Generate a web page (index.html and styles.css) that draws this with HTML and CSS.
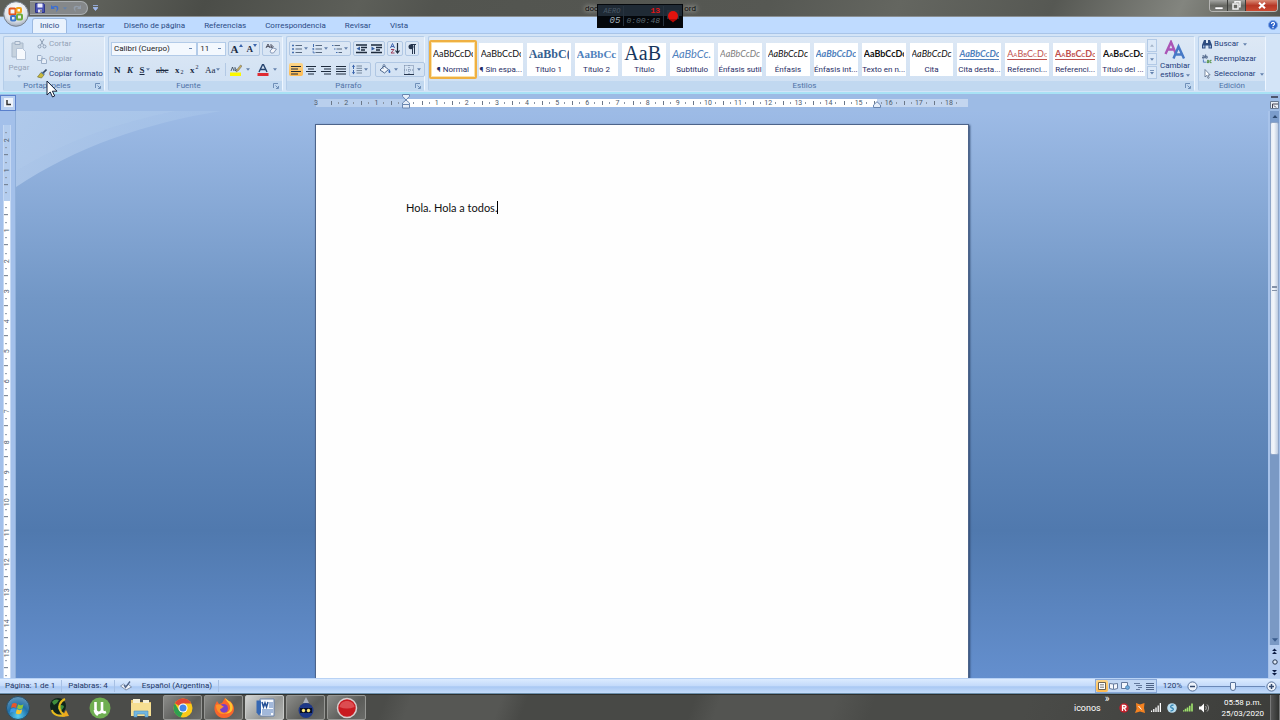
FILE: index.html
```html
<!DOCTYPE html>
<html lang="es">
<head>
<meta charset="utf-8">
<title>Documento - Word</title>
<link rel="stylesheet" href="styles.css">
</head>
<body>
<svg class="defs" aria-hidden="true">
  <symbol id="caret" viewBox="0 0 5 3"><path d="M0 0h5L2.500 3z" fill="#6482ad"/></symbol>
  <symbol id="launch" viewBox="0 0 6 6"><path d="M.5 5V.5H5M2.500 2.500 5 5M5.500 3v2.500H3" fill="none" stroke="#6f8fb8"/></symbol>
  <symbol id="lines" viewBox="0 0 10 10"><path d="M0 1.500h10M0 6.500h10" stroke="#1d2b3d" stroke-width="1.200"/><path d="M0 4h7M0 9h7" stroke="#1d2b3d" stroke-width="1.200"/></symbol>
</svg>

<header class="titlebar">
  <div class="quick">
    <button class="ic" aria-label="Guardar"><svg width="10" height="10" viewBox="0 0 10 10"><path d="M.5.5h8l1 1v8h-9z" fill="#4a53b4" stroke="#2e3585"/><path d="M2.500.5h5v4h-5z" fill="#eef"/><path d="M3 6.500h4v3H3z" fill="#dde"/><path d="M5.500 7h1v2h-1z" fill="#333"/></svg></button>
    <button class="ic undo" aria-label="Deshacer"><svg width="10" height="9" viewBox="0 0 10 9"><path d="M1 1v4h4L3.700 3.700C6 2 8 4 6 8 10 5 9 0 2.600 2.500z" fill="#3d6fd0"/></svg><svg width="4" height="3"><use href="#caret"/></svg></button>
    <button class="ic faded" aria-label="Rehacer"><svg width="10" height="9" viewBox="0 0 10 9"><path d="M9 1v4H5l1.300-1.300C4 2 2 4 4 8 0 5 1 0 7.400 2.500z" fill="#9fb0c8"/></svg></button>
  </div>
  <button class="ic more" aria-label="Personalizar"><svg width="5" height="6" viewBox="0 0 5 6"><path d="M0 .5h5M0 2.500h5L2.500 5.500z" stroke="#9fbaf0" fill="#9fbaf0" stroke-width=".8"/></svg></button>
  <h1 class="title"><span>doc</span><span>ord</span></h1>
  <div class="winbtns">
    <button aria-label="Minimizar"><svg width="8" height="8"><path d="M0 5h8v2.500H0z" fill="#fff" stroke="#444" stroke-width=".5"/></svg></button>
    <button aria-label="Restaurar"><svg width="9" height="9" viewBox="0 0 9 9"><path d="M3 2V.8h5v5H7M1 3h5v5H1z" fill="none" stroke="#f4f4f4" stroke-width="1.500"/></svg></button>
    <button class="close" aria-label="Cerrar"><svg width="8" height="7" viewBox="0 0 8 7"><path d="m1 .7 6 5.600M7 .7 1 6.300" stroke="#fff" stroke-width="2"/></svg></button>
  </div>
  <button class="orb" aria-label="Botón de Office"><svg width="26" height="26" viewBox="0 0 26 26"><defs><radialGradient id="og" cx=".5" cy=".3" r=".75"><stop offset="0" stop-color="#fff"/><stop offset=".65" stop-color="#dfe3ea"/><stop offset="1" stop-color="#8d9bb0"/></radialGradient></defs><circle cx="13" cy="13" r="12.300" fill="url(#og)" stroke="#78828f"/><g fill="none" stroke-width="2"><rect x="6.500" y="7.500" width="6" height="6" rx="1" stroke="#e3561d"/><rect x="13.500" y="7" width="4.500" height="4.500" rx="1" stroke="#f0a21d"/><rect x="8" y="15" width="4.500" height="4.500" rx="1" stroke="#3f78c9"/><rect x="14" y="13.500" width="5" height="5" rx="1" stroke="#6aab3c"/></g></svg></button>
  <div class="recorder">
    <div class="rec-cell"><span class="dim">AERO</span><span class="big">05</span></div>
    <div class="rec-cell wide"><span class="red">13</span><span class="time">0:00:48</span></div>
    <svg width="14" height="16" viewBox="0 0 14 16"><path d="M1 2h12v9H1z" fill="#26313c"/><circle cx="7" cy="8" r="5" fill="#e3130e"/><path d="m3 11 4 3.500L11 11z" fill="#b10a08"/></svg>
  </div>
</header>

<nav class="tabs">
  <a class="on" href="#">Inicio</a><a href="#">Insertar</a><a href="#">Diseño de página</a><a href="#">Referencias</a><a href="#">Correspondencia</a><a href="#">Revisar</a><a href="#">Vista</a>
  <button class="ic help" aria-label="Ayuda"><svg width="10" height="10" viewBox="0 0 10 10"><circle cx="5" cy="5" r="4.500" fill="#2c62c9" stroke="#7fa6e4"/><path d="M3.500 4c0-2.200 3.200-2 3 0C6.400 5 5 5 5 6.200M5 7v1.200" stroke="#fff" fill="none" stroke-width="1.200"/></svg></button>
</nav>

<section class="ribbon">
  <div class="group clip">
    <div class="body">
      <button class="paste"><svg width="16" height="20" viewBox="0 0 16 20"><path d="M1 2h11v14H1z" fill="#c6d2de" stroke="#a9b9cb"/><path d="M4 .5h5v3H4z" fill="#dbe3ec" stroke="#a0b0c4"/><path d="M5.500 7.500h6l3 3v8h-9z" fill="#f6f9fd" stroke="#b4c3d6"/></svg><span>Pegar</span><svg width="4" height="3" opacity=".5"><use href="#caret"/></svg></button>
      <div class="cliplist">
        <button class="off"><svg width="10" height="10" viewBox="0 0 10 10"><path d="m3 0 3.500 6M7 0 3.500 6" stroke="#8fa0b5"/><circle cx="2.500" cy="7.500" r="1.500" fill="none" stroke="#8fa0b5"/><circle cx="7.500" cy="7.500" r="1.500" fill="none" stroke="#8fa0b5"/></svg>Cortar</button>
        <button class="off"><svg width="10" height="10" viewBox="0 0 10 10"><path d="M.5 1.500H4l1 1v4H.500zM4.500 4.500H8l1.500 1.500v3.500h-5z" fill="#e7eef7" stroke="#9db0c9"/></svg>Copiar</button>
        <button><svg width="10" height="10" viewBox="0 0 10 10"><path d="m9.500.5-4 4" stroke="#30435e" stroke-width="1.600"/><path d="M4 3.500 7 6 4.500 9 .5 8z" fill="#c8b93c" stroke="#6b6a2a" stroke-width=".6"/><path d="m4.500 3 3 2.500" stroke="#5577a4" stroke-width="1.500"/></svg>Copiar formato</button>
      </div>
    </div>
    <footer><span>Portapapeles</span><svg width="6" height="6"><use href="#launch"/></svg></footer>
  </div>

  <div class="group font">
    <div class="body stack">
      <div class="line top">
        <select class="fam" aria-label="Fuente"><option>Calibri (Cuerpo)</option></select>
        <select class="size" aria-label="Tamaño"><option>11</option></select>
        <span class="set"><button class="serif" aria-label="Agrandar fuente">A<svg width="4" height="9" viewBox="0 0 4 9"><path d="M0 3h4L2 0z" fill="#3c66ad"/></svg></button><button class="serif small" aria-label="Encoger fuente">A<svg width="4" height="9" viewBox="0 0 4 9"><path d="M0 0h4L2 3z" fill="#3c66ad"/></svg></button></span>
        <span class="set"><button aria-label="Borrar formato"><svg width="12" height="11" viewBox="0 0 12 11"><path d="m1 5 2-4 2 4M1.600 3.600h2.800M6 1v4M6 3.500c3-2 3 2 0 1.300" stroke="#334" stroke-width=".8" fill="none"/><path d="m5 8 3-3 3.500 1-3 4H6z" fill="#f4f6fb" stroke="#7286a8" stroke-width=".8"/></svg></button></span>
      </div>
      <div class="line low">
        <button><b>N</b></button><button><b><i>K</i></b></button><button><b><u>S</u></b><svg width="4" height="3"><use href="#caret"/></svg></button><button><s>abc</s></button><button><b>x</b><sub>2</sub></button><button><b>x</b><sup>2</sup></button><button>Aa<svg width="4" height="3"><use href="#caret"/></svg></button>
        <span class="bar"></span>
        <button aria-label="Resaltado"><svg width="12" height="12" viewBox="0 0 12 12"><path d="M0 8.500h11V12H0z" fill="#fbf800"/><path d="m1 7 1.500-4L4 7M5 3v3.500c2 .5 2-2 0-1.600" stroke="#345" stroke-width=".8" fill="none"/><path d="M10.500 1 7 5.500 6 8l2.500-1.500L12 2z" fill="#c9ad58" stroke="#666" stroke-width=".5"/></svg><svg width="4" height="3"><use href="#caret"/></svg></button>
        <button aria-label="Color de fuente"><svg width="12" height="12" viewBox="0 0 12 12"><path d="M.5 9h11v3H.5z" fill="#df2b32"/><path d="M2 8 5.500.8h1L10 8M3.500 5.500h5" stroke="#27446f" fill="none" stroke-width="1.400"/></svg><svg width="4" height="3"><use href="#caret"/></svg></button>
      </div>
    </div>
    <footer><span>Fuente</span><svg width="6" height="6"><use href="#launch"/></svg></footer>
  </div>

  <div class="group para">
    <div class="body stack">
      <div class="line top">
        <span class="set"><button aria-label="Viñetas"><svg width="10" height="10" viewBox="0 0 10 10"><path d="M0 1.500h2M0 5h2M0 8.500h2" stroke="#456fb0" stroke-width="1.600"/><path d="M3.500 1.500H10M3.500 5H10M3.500 8.500H10" stroke="#596a80"/></svg><svg width="4" height="3"><use href="#caret"/></svg></button><button aria-label="Numeración"><svg width="10" height="10" viewBox="0 0 10 10"><path d="M1.500 0v3M.5 4.500h1.200v1.200H.5M.5 8h1.500v1.500" stroke="#456fb0" fill="none"/><path d="M3.500 1.500H10M3.500 5H10M3.500 8.500H10" stroke="#596a80"/></svg><svg width="4" height="3"><use href="#caret"/></svg></button><button aria-label="Lista multinivel"><svg width="10" height="10" viewBox="0 0 10 10"><path d="M0 1.500h1.500M2 5h1.500M4 8.500h1.500" stroke="#456fb0"/><path d="M2.500 1.500H8M4.500 5H10M6.500 8.500H10" stroke="#596a80"/></svg><svg width="4" height="3"><use href="#caret"/></svg></button></span>
        <span class="set"><button aria-label="Reducir sangría"><svg width="11" height="10" viewBox="0 0 11 10"><path d="M0 1h11M5 3.500h6M5 6h4M0 8.500h11" stroke="#1d2b3d" stroke-width="1.300"/><path d="M4 2.500v4L.5 4.700z" fill="#345d9f"/></svg></button><button aria-label="Aumentar sangría"><svg width="11" height="10" viewBox="0 0 11 10"><path d="M0 1h11M5 3.500h6M5 6h4M0 8.500h11" stroke="#1d2b3d" stroke-width="1.300"/><path d="M.5 2.500v4L4 4.700z" fill="#345d9f"/></svg></button></span>
        <span class="set"><button aria-label="Ordenar"><svg width="10" height="11" viewBox="0 0 10 11"><path d="m.5 5 2-4.500 2 4.500M1 3.500h3" stroke="#4167b0" fill="none"/><path d="M1 6.500h3L1 10h3.500" stroke="#9b3c5a" fill="none"/><path d="M7.500 0v9M5.500 7.500l2 2.500 2-2.500" stroke="#1d2b3d" fill="none" stroke-width="1.200"/></svg></button></span>
        <span class="set"><button aria-label="Mostrar todo"><svg width="8" height="10" viewBox="0 0 8 10"><path d="M4.500 0v10M6.500 0v10M3 .5h5" stroke="#26364e"/><circle cx="3" cy="2.700" r="2.500" fill="#26364e"/></svg></button></span>
      </div>
      <div class="line low">
        <button class="hot" aria-label="Izquierda"><svg width="10" height="10"><use href="#lines"/></svg></button><button aria-label="Centrar"><svg width="10" height="10" viewBox="0 0 10 10"><path d="M0 1.500h10M2 4h6M0 6.500h10M2 9h6" stroke="#1d2b3d" stroke-width="1.200"/></svg></button><button aria-label="Derecha"><svg width="10" height="10" viewBox="0 0 10 10"><path d="M0 1.500h10M3 4h7M0 6.500h10M3 9h7" stroke="#1d2b3d" stroke-width="1.200"/></svg></button><button aria-label="Justificar"><svg width="10" height="10" viewBox="0 0 10 10"><path d="M0 1.500h10M0 4h10M0 6.500h10M0 9h10" stroke="#1d2b3d" stroke-width="1.200"/></svg></button>
        <span class="set"><button aria-label="Interlineado"><svg width="10" height="11" viewBox="0 0 10 11"><path d="M1.500 1v9" stroke="#3c66ad" stroke-dasharray="4 1"/><path d="M0 3 1.500.5 3 3zM0 8l1.500 2.500L3 8z" fill="#3c66ad"/><path d="M4.500 2H10M4.500 4.300H10M4.500 6.600H10M4.500 9H10" stroke="#75869b"/></svg><svg width="4" height="3"><use href="#caret"/></svg></button></span>
        <span class="set"><button class="gapb" aria-label="Sombreado"><svg width="12" height="11" viewBox="0 0 12 11"><path d="m5 2 4.500 3.500L5.500 9 1 6z" fill="#f0f5fb" stroke="#50698f"/><path d="M4 5V1.500C4 .2 6 .2 6 1.500V3" fill="none" stroke="#50698f" stroke-width=".8"/><path d="M10 5c2 2 1.500 4 .5 4S9 8 10 5z" fill="#3368bd"/></svg><svg width="4" height="3"><use href="#caret"/></svg></button><button class="gapb" aria-label="Bordes"><svg width="10" height="10" viewBox="0 0 10 10"><path d="M.5.5h9v9M.5.5v9M5 0v10M0 5h10" stroke="#7185a3" stroke-dasharray="1 1" fill="none"/><path d="M0 9.500h10" stroke="#26364e"/></svg><svg width="4" height="3"><use href="#caret"/></svg></button></span>
      </div>
    </div>
    <footer><span>Párrafo</span><svg width="6" height="6"><use href="#launch"/></svg></footer>
  </div>

  <div class="group styles">
    <div class="body">
      <div class="gallery">
        <button class="st sel"><span class="pv">AaBbCcDc</span><span class="nm">¶ Normal</span></button>
        <button class="st"><span class="pv">AaBbCcDc</span><span class="nm">¶ Sin espa...</span></button>
        <button class="st"><span class="pv h1">AaBbC(</span><span class="nm">Título 1</span></button>
        <button class="st"><span class="pv h2">AaBbCc</span><span class="nm">Título 2</span></button>
        <button class="st"><span class="pv tt">AaB</span><span class="nm">Título</span></button>
        <button class="st"><span class="pv subt">AaBbCc.</span><span class="nm">Subtítulo</span></button>
        <button class="st"><span class="pv it gray">AaBbCcDc</span><span class="nm">Énfasis sutil</span></button>
        <button class="st"><span class="pv it">AaBbCcDc</span><span class="nm">Énfasis</span></button>
        <button class="st"><span class="pv it blue bold">AaBbCcDc</span><span class="nm">Énfasis int...</span></button>
        <button class="st"><span class="pv bold">AaBbCcDc</span><span class="nm">Texto en n...</span></button>
        <button class="st"><span class="pv it">AaBbCcDc</span><span class="nm">Cita</span></button>
        <button class="st"><span class="pv it blue bold ul">AaBbCcDc</span><span class="nm">Cita desta...</span></button>
        <button class="st"><span class="pv sc pink ul">AaBbCcDc</span><span class="nm">Referenci...</span></button>
        <button class="st"><span class="pv sc pink bold ul">AaBbCcDc</span><span class="nm">Referenci...</span></button>
        <button class="st"><span class="pv sc bold">AaBbCcDc</span><span class="nm">Título del ...</span></button>
      </div>
      <div class="gscroll"><button aria-label="Subir"><svg width="4" height="3" viewBox="0 0 5 3"><path d="M0 3h5L2.500 0z" fill="#a5b5c9"/></svg></button><button aria-label="Bajar"><svg width="4" height="3"><use href="#caret"/></svg></button><button aria-label="Más"><svg width="4" height="5" viewBox="0 0 5 6"><path d="M0 .5h5" stroke="#6482ad"/><path d="M0 2.500h5L2.500 5.500z" fill="#6482ad"/></svg></button></div>
      <button class="change"><svg width="22" height="20" viewBox="0 0 22 20"><path d="M1.500 14 7 2l5 12M4 9.500h6.500" stroke="#ab55b6" stroke-width="2.400" fill="none"/><path d="m9.500 18.500 5-12 5.500 12M11.500 14.500h7" stroke="#4779c6" stroke-width="2.400" fill="none"/></svg><span>Cambiar<br>estilos <svg width="4" height="3"><use href="#caret"/></svg></span></button>
    </div>
    <footer><span>Estilos</span><svg width="6" height="6"><use href="#launch"/></svg></footer>
  </div>

  <div class="group edit">
    <div class="body">
      <div class="cliplist">
        <button><svg width="10" height="9" viewBox="0 0 10 9"><path d="M2 0h2v3h2V0h2l2 5v3.500H6.500v-3h-3v3H0V5z" fill="#2f4d80"/><path d="M1 5.500h1.500v2H1zM7.500 5.500H9v2H7.500z" fill="#9db8e0"/></svg>Buscar <svg class="cr" width="4" height="3"><use href="#caret"/></svg></button>
        <button><svg width="10" height="10" viewBox="0 0 11 10"><path d="M.5 1.500h2V4h-2V3h2M4 0v4h1.700V2H4" stroke="#445a80" fill="none"/><path d="M1.500 5.500v3h3" stroke="#4a76bd" fill="none"/><path d="M5.500 6.500h2V9h-2V8h2M10.500 6.500h-1.600V9h1.600" stroke="#4c8b3b" fill="none"/></svg>Reemplazar</button>
        <button><svg width="10" height="10" viewBox="0 0 10 10"><path d="M3 .5v7.500l1.700-1.600 1.300 3 1.200-.6-1.300-2.800h2.300z" fill="#fff" stroke="#5a6e8c" stroke-width=".8"/></svg>Seleccionar <svg class="cr" width="4" height="3"><use href="#caret"/></svg></button>
      </div>
    </div>
    <footer><span>Edición</span></footer>
  </div>
</section>

<div class="rulerrow">
  <button class="corner" aria-label="Tabulación"><svg width="9" height="9" viewBox="0 0 9 9"><path d="M0 0h9v9H0z" fill="#eef3fb"/><path d="M3 2v4.500h4" stroke="#333" stroke-width="1.500" fill="none"/></svg></button>
  <div class="hwrap">
    <div class="hruler">
      <div class="hticks"><span>3</span><span>2</span><span>1</span><span></span><span>1</span><span>2</span><span>3</span><span>4</span><span>5</span><span>6</span><span>7</span><span>8</span><span>9</span><span>10</span><span>11</span><span>12</span><span>13</span><span>14</span><span>15</span><span>16</span><span>17</span><span>18</span></div>
      <svg class="mark first" width="8" height="15" viewBox="0 0 8 15"><path d="M.5.5h7v1.800L4 6 .5 2.300zM.5 10.500V9L4 6l3.500 3v1.500zM.5 10.500h7v3.500h-7z" fill="#e6eef9" stroke="#6a86b0"/></svg>
      <svg class="mark last" width="8" height="7" viewBox="0 0 8 7"><path d="M.5 6.500V4L4 .7 7.500 4v2.500z" fill="#e6eef9" stroke="#6a86b0"/></svg>
    </div>
  </div>
  <button class="rtoggle" aria-label="Regla"><svg width="9" height="14" viewBox="0 0 9 14"><path d="M1 1h7" stroke="#334" stroke-width="1.500"/><path d="M.5 5.500h8v7h-8z" fill="#e9eef5" stroke="#667891"/><path d="M2.500 12V8H8M4 9.500l2 2" stroke="#445" fill="none"/></svg></button>
</div>

<main class="work">
  <div class="vside">
    <div class="vruler"><span>2</span><span>1</span><span></span><span>1</span><span>2</span><span>3</span><span>4</span><span>5</span><span>6</span><span>7</span><span>8</span><span>9</span><span>10</span><span>11</span><span>12</span><span>13</span><span>14</span><span>15</span><span></span></div>
  </div>
  <div class="canvas">
    <svg class="swoosh" viewBox="0 0 240 78" width="240" height="78"><defs><linearGradient id="sw" x1="0" y1="0" x2="1" y2="0"><stop offset="0" stop-color="#b0c9ea" stop-opacity=".85"/><stop offset="1" stop-color="#a9c6ea" stop-opacity=".5"/></linearGradient></defs><path d="M0 0h205C130 12 60 36 0 76z" fill="url(#sw)"/><path d="M0 0h160C100 12 50 30 0 60z" fill="#b9d3ee" opacity=".2"/></svg>
    <article class="page"><p>Hola. Hola a todos.<span class="caret"></span></p></article>
  </div>
  <div class="vscroll">
    <button class="up" aria-label="Arriba"><svg width="6" height="3" viewBox="0 0 5 3"><path d="M0 3h5L2.500 0z" fill="#2e496f"/></svg></button>
    <div class="track"><div class="thumb"><i></i></div></div>
    <button class="down" aria-label="Abajo"><svg width="6" height="4" viewBox="0 0 5 3"><path d="M0 0h5L2.500 3z" fill="#3a5c8c"/></svg></button>
    <button class="nav" aria-label="Página anterior"><svg width="5" height="6" viewBox="0 0 5 6"><path d="M0 3 2.500.5 5 3zM0 6l2.500-2.500L5 6z" fill="#0c1c44"/></svg></button>
    <button class="nav" aria-label="Examinar"><svg width="6" height="6" viewBox="0 0 6 6"><circle cx="3" cy="3" r="2.200" fill="#dfeaf8" stroke="#26364e"/></svg></button>
    <button class="nav" aria-label="Página siguiente"><svg width="5" height="6" viewBox="0 0 5 6"><path d="M0 0h5L2.500 2.500zM0 3h5L2.500 5.500z" fill="#0c1c44"/></svg></button>
  </div>
</main>

<div class="status">
  <button>Página: 1 de 1</button><button>Palabras: 4</button>
  <button class="spell" aria-label="Revisión"><svg width="12" height="10" viewBox="0 0 12 10"><path d="m.5 5 3-2L6 5l2.500-1.500 3 2.500L6 9z" fill="#f2f5fb" stroke="#6d7f9b" stroke-width=".8"/><path d="m4 4 1.500 2.500L10 .5" fill="none" stroke="#51658a" stroke-width="1.300"/></svg></button>
  <button>Español (Argentina)</button>
  <div class="views">
    <button class="hot" aria-label="Diseño de impresión"><svg width="8" height="8" viewBox="0 0 8 8"><path d="M.5.5h7v7h-7z" fill="#fff" stroke="#6b6252"/><path d="M2 2.500h4M2 4h4M2 5.500h4" stroke="#777" stroke-width=".7"/></svg></button><button aria-label="Lectura"><svg width="9" height="8" viewBox="0 0 9 8"><path d="M.5 1.500 4.500 2l4-.5v5l-4 1-4-1zM4.500 2v5" fill="#f4f7fc" stroke="#64799b"/></svg></button><button aria-label="Web"><svg width="9" height="8" viewBox="0 0 9 8"><path d="M.5.5h6v6h-6z" fill="#f4f7fc" stroke="#64799b"/><circle cx="6.500" cy="5.500" r="2" fill="#6caadc" stroke="#41719f" stroke-width=".6"/></svg></button><button aria-label="Esquema"><svg width="8" height="8" viewBox="0 0 8 8"><path d="M0 1.500h6M2 3.500h6M4 5.500h4M2 7.500h4" stroke="#64799b"/></svg></button><button aria-label="Borrador"><svg width="8" height="8" viewBox="0 0 8 8"><path d="M0 1.500h8M0 3.500h8M0 5.500h8M0 7.500h8" stroke="#4f6386"/></svg></button>
  </div>
  <button class="pct">120%</button>
  <div class="zoom">
    <button aria-label="Alejar"><svg width="11" height="11" viewBox="0 0 11 11"><circle cx="5.500" cy="5.500" r="4.600" fill="#edf3fb" stroke="#58729a"/><path d="M3 5.500h5" stroke="#34496d" stroke-width="1.500"/></svg></button>
    <input type="range" min="0" max="100" value="52" aria-label="Zoom">
    <button aria-label="Acercar"><svg width="11" height="11" viewBox="0 0 11 11"><circle cx="5.500" cy="5.500" r="4.600" fill="#edf3fb" stroke="#58729a"/><path d="M3 5.500h5M5.500 3v5" stroke="#34496d" stroke-width="1.500"/></svg></button>
  </div>
</div>

<footer class="taskbar">
  <button class="pin" aria-label="Inicio"><svg width="26" height="24" viewBox="0 0 26 24"><defs><radialGradient id="wg" cx=".5" cy=".85" r=".9"><stop offset="0" stop-color="#58d0f4"/><stop offset=".5" stop-color="#2070a8"/><stop offset="1" stop-color="#6f9dbd"/></radialGradient></defs><circle cx="13" cy="12" r="11.500" fill="url(#wg)" stroke="#294d66"/><path d="M7 8c2-1.500 3.500-1.200 5 0l-1 4c-1.600-1-3.200-1.200-5 0z" fill="#e8562a"/><path d="M13 8.300c1.800 1.200 3.500 1.200 5.500 0l-1 4c-2 1.200-3.800 1-5.400 0z" fill="#8cc63c"/><path d="M5.800 13c1.800-1.200 3.400-1 5 0l-1 4c-1.600-1.200-3.200-1.200-5 0z" fill="#3c9ce8"/><path d="M11.800 13.300c1.600 1 3.400 1.200 5.400 0l-1 4c-2 1.200-3.800 1.200-5.400 0z" fill="#fbc52d"/></svg></button>
  <button class="pin" aria-label="Globo"><svg width="22" height="22" viewBox="0 0 22 22"><circle cx="10" cy="9" r="8" fill="#10241a"/><path d="M4 5c2-3 5-3 7-2l-2 3-3 2zM10 9c3-2 6-1 6 1l-3 4-3-2z" fill="#3f8e3d"/><path d="M4 13c1 5 8 7 12 5M17 2c-6 3-7 8-4 13l4 4" stroke="#e8bb1c" stroke-width="2" fill="none"/><path d="m14 20 7-1-3-6z" fill="#efa91e"/></svg></button>
  <button class="pin" aria-label="uTorrent"><svg width="22" height="22" viewBox="0 0 22 22"><circle cx="11" cy="11" r="10.500" fill="#6fae51"/><path d="M6.500 5v7c0 5 6 4.500 6.500 1V5M13 12c0 3.500 2 3.800 4 3M6 13c0 2 1 3.500 3 5" stroke="#fff" stroke-width="2.600" fill="none"/></svg></button>
  <button class="pin" aria-label="Explorador"><svg width="22" height="20" viewBox="0 0 22 20"><path d="M1 2h8l1 2h11v14H1z" fill="#e6c56a"/><path d="M3 1h7v4H3zM13 2h6v4h-6z" fill="#f6f0d4"/><path d="M1 5h20v13H1z" fill="#f6df92"/><path d="M4 19v-6h14v6h-3v-3H7v3z" fill="#72b8e0" stroke="#4e8fbc" stroke-width=".6"/></svg></button>
  <button class="app" aria-label="Chrome"><svg width="20" height="20" viewBox="0 0 20 20"><circle cx="10" cy="10" r="9.500" fill="#fbc919"/><path d="M10 10 1.800 5.300A9.500 9.500 0 0 1 18.300 5.500H10z" fill="#df4634"/><path d="M1.800 5.300 6 12.500l4 2-2.500 4.700A9.500 9.500 0 0 1 1.800 5.300z" fill="#2f9f50"/><circle cx="10" cy="10" r="4.600" fill="#fff"/><circle cx="10" cy="10" r="3.500" fill="#4484e8"/></svg></button>
  <button class="app" aria-label="Firefox"><svg width="22" height="22" viewBox="0 0 22 22"><path d="M11 21C3 21 0 13 2 8l2-4 2 3 3-1 3-5c2 2 3 3 4 4l1-1c4 4 5 8 3 12-2 3-5 5-9 5z" fill="#f9652c"/><path d="M12 1c1 4 6 5 5 11-1 3-4 5-7 4 9 2 11-4 9-9-2-3-5-4-7-6z" fill="#ffc531"/><circle cx="10.500" cy="11.500" r="4.500" fill="#7a3fc6"/><path d="M3 8c3-1 6 0 8 2-2 0-2 2-4 2 0 3 4 5 7 3-3 4-11 2-11-7z" fill="#ff9328"/></svg></button>
  <button class="app lit" aria-label="Word"><svg width="20" height="20" viewBox="0 0 20 20"><path d="M5 1h14v17H5z" fill="#f8fafd" stroke="#6681ad"/><path d="M1.500 2.500H6v12l-2 3-2.500-3z" fill="#3567b3"/><path d="m7 4 1.500 5 1.500-4 1.500 4L13 4" stroke="#244f95" stroke-width="1.500" fill="none"/><path d="M14 5h4M14 7h4M14 9h4M7 12h11M7 14h11M7 16h9" stroke="#4d77b7"/></svg></button>
  <button class="app" aria-label="Ninja"><svg width="18" height="22" viewBox="0 0 18 22"><path d="m9 0 3 6H6z" fill="#aab0bd"/><circle cx="9" cy="13.500" r="7.500" fill="#1d3787"/><path d="M3 11h12v5H3z" fill="#080f29"/><circle cx="6.500" cy="13.500" r="1.700" fill="#ffe97a"/><circle cx="11.500" cy="13.500" r="1.700" fill="#ffe97a"/></svg></button>
  <button class="app" aria-label="Grabadora"><svg width="22" height="22" viewBox="0 0 22 22"><circle cx="11" cy="11" r="9.500" fill="#c91a20" stroke="#d7cfcf" stroke-width="1.500"/><path d="M3.500 10c1-8 14-8 15 0-5 2-10 2-15 0z" fill="#e46466" opacity=".7"/></svg></button>
  <div class="tray">
    <span class="lbl">iconos</span><span class="chev">»</span>
    <svg width="10" height="10" viewBox="0 0 10 10"><circle cx="5" cy="5" r="4.700" fill="#c3202c"/><path d="M3.500 8V2.500h2c2 0 2 2.500 0 2.500h-2M5 5l2 3" stroke="#fff" fill="none" stroke-width="1.300"/></svg>
    <svg width="10" height="10" viewBox="0 0 10 10"><path d="M1 0 5 1.500 9.500 0 9 5l1 5-5-1.500L0 10l1.500-4z" fill="#f58220"/><path d="m3.500 3 3 3.500" stroke="#fff"/></svg>
    <svg width="10" height="9" viewBox="0 0 10 9"><path d="M.5 9V7.500M2.800 9V6M5 9V4.500M7.200 9V2.500M9.400 9V0" stroke="#fff" stroke-width="1.300"/></svg>
    <svg width="10" height="10" viewBox="0 0 10 10"><circle cx="5" cy="5" r="4.800" fill="#b9def0"/><path d="M6.500 2C3 2 3 4.500 5 5s2 3-1.500 3" stroke="#3b88b5" stroke-width="1.300" fill="none"/></svg>
    <svg width="10" height="9" viewBox="0 0 11 9"><path d="M.5 9V7.500M2.800 9V6M5 9V4.500M7.400 9V2.500M9.900 9V0" stroke="#9fe36c" stroke-width="1.800"/></svg>
    <svg width="10" height="10" viewBox="0 0 10 10"><path d="M0 3.500h2L5 .5v9L2 6.500H0z" fill="#fff"/><path d="M6.500 3c1 1 1 3 0 4M8 1.500c2 2 2 5 0 7" stroke="#ccc" fill="none" stroke-width=".8"/></svg>
    <time class="clock">05:58 p.m.<br>25/03/2020</time>
    <button class="desk" aria-label="Mostrar escritorio"></button>
  </div>
</footer>

<svg class="pointer" width="12" height="18" viewBox="0 0 12 18"><path d="M1 1v14l3.200-3 2.300 5 2.200-1-2.300-4.800H11z" fill="#fff" stroke="#16223a"/></svg>
</body>
</html>
```

FILE: styles.css
```css
* { box-sizing: border-box; }
body {
  margin: 0;
  height: 100vh;
  display: flex;
  flex-direction: column;
  overflow: hidden;
  font: 8px/10px Roboto, "Noto Sans", sans-serif;
  color: #1e3c7b;
}
button, select, input { font: inherit; color: inherit; }
button { border: 0; background: none; padding: 0; display: flex; align-items: center; justify-content: center; }
svg { display: block; flex: none; }
.defs { position: absolute; width: 0; height: 0; }

/* Title bar */
.titlebar {
  position: relative;
  height: 17px;
  flex: none;
  display: flex;
  align-items: center;
  padding-left: 30px;
  background: linear-gradient(115deg, #5d5f59 0 8%, #4b4d48 16%, #5d5f59 28%, #52544f 34%, #565853 60%, #646660 70%, #565853 82%, #83857f 92%, #55564f 100%);
  border-bottom: 1px solid #8a8f92;
}
.quick {
  display: flex;
  align-items: center;
  gap: 5px;
  height: 14px;
  width: 58px;
  padding-left: 5px;
  border: 1px solid #a9adb0;
  border-left: 0;
  border-radius: 0 7px 7px 0;
  background: #85888a;
}
.undo { gap: 3px; }
.faded { opacity: .5; }
.more { margin-left: 5px; }
.title {
  position: absolute;
  left: calc(50% - 55px);
  top: 4px;
  width: 111px;
  display: flex;
  justify-content: space-between;
  margin: 0;
  font-size: 8px;
  line-height: 10px;
  font-weight: 400;
  color: #0c0c0c;
  text-shadow: 0 0 4px #c9cbc8, 0 0 6px #b4b6b3;
}
.winbtns {
  align-self: flex-start;
  display: flex;
  height: 12px;
  width: 69px;
  margin-left: auto;
  margin-right: 2px;
  border: 1px solid #b5b5b3;
  border-top: 0;
  border-radius: 0 0 4px 4px;
  overflow: hidden;
}
.winbtns button { width: 18px; background: linear-gradient(#a5a6a3, #676863 50%, #7b7c77); border-right: 1px solid #3c3d3a; }
.winbtns .close { flex: 1; border: 0; background: linear-gradient(#d98b75, #b73826 50%, #cb4a31); }
.orb { position: absolute; left: 3px; top: 1px; z-index: 3; }
.recorder {
  position: absolute;
  z-index: 3;
  left: calc(50% - 43px);
  top: 4px;
  width: 86px;
  height: 24px;
  display: flex;
  align-items: center;
  gap: 2px;
  padding: 2px;
  border: 1px solid #05080c;
  background: linear-gradient(#1f2a35 0 48%, #04070b 52%);
  font: 8px/10px "Liberation Mono", monospace;
}
.rec-cell { width: 25px; border-right: 1px solid #27333f; display: flex; flex-direction: column; align-items: flex-end; padding-right: 3px; }
.rec-cell.wide { width: 38px; }
.dim { color: #4a5966; font-size: 7px; font-style: italic; }
.big { color: #a6b3bb; font-size: 9px; font-style: italic; }
.red { color: #e01616; font-weight: 700; }
.time { color: #5b6973; font-size: 8px; font-style: italic; }

/* Tabs */
.tabs {
  flex: none;
  height: 17px;
  display: flex;
  align-items: flex-end;
  padding-left: 32px;
  background: #bfdbff;
  border-bottom: 1px solid #a8c4e8;
}
.tabs a { height: 15px; padding: 3px 9px 0 10px; color: #2a4a85; text-decoration: none; white-space: nowrap; }
.tabs .on { padding: 2px 7px 0; border: 1px solid #9cb9e0; border-bottom: 0; border-radius: 3px 3px 0 0; background: #e9f2fd; }
.help { margin: 0 2px 3px auto; }

/* Ribbon */
.ribbon {
  flex: none;
  height: 60px;
  display: flex;
  gap: 3px;
  padding: 2px 4px 1px 3px;
  background: #d3e4f7;
  border-bottom: 2px solid #a8e2f5;
}
.group {
  display: flex;
  flex-direction: column;
  border: 1px solid #b4cde9;
  border-bottom: 0;
  border-right-color: #eef6ff;
  border-radius: 2px;
  background: linear-gradient(#dde8f5, #cfe0f3);
}
.body { flex: 1; display: flex; min-height: 0; }
.group footer { height: 10px; display: flex; align-items: center; justify-content: center; position: relative; padding-right: 14px; background: #c1d8f0; color: #4f72a6; }
.edit footer { padding-right: 0; }
.group footer svg { position: absolute; right: 3px; top: 2px; }
.clip { width: 102px; }
.font { width: 175px; }
.para { width: 139px; }
.styles { flex: 1; }
.edit { width: 68px; margin-right: 10px; }
.paste { flex-direction: column; width: 30px; color: #97a5b8; gap: 2px; }
.cliplist { display: flex; flex-direction: column; justify-content: space-between; align-items: flex-start; padding: 2px 0 2px 3px; }
.cliplist button { gap: 2px; white-space: nowrap; height: 10px; }
.cliplist .cr { margin-left: 2px; }
.off { color: #93a2b6; }
.stack { flex-direction: column; justify-content: space-between; padding: 4px 2px; }
.line { display: flex; align-items: center; height: 15px; gap: 2px; color: #1b2b44; }
.line button { height: 13px; padding: 0 2px; gap: 3px; }
.line select { height: 14px; appearance: none; border: 1px solid #b3cbe8; border-radius: 0; padding: 0 2px; color: #222; background: #f3f8fe linear-gradient(#6482ad, #6482ad) no-repeat right 4px center / 3px 1px; }
.fam { width: 89px; }
.size { width: 29px; margin-left: -2px; }
.set { display: flex; border: 1px solid #b0c7e3; border-radius: 2px; height: 15px; align-items: center; }
.line .serif { font: 700 11px/12px "Liberation Serif", serif; gap: 0; padding: 0 2px; }
.line .small { font-size: 9px; }
sup, sub { font-size: 6px; line-height: 6px; }
sup { margin-bottom: 5px; }
sub { margin-top: 5px; }
.font .low { justify-content: space-between; padding: 0 1px; font-family: "Liberation Serif", serif; font-size: 9px; }
.font .low button { gap: 1px; }
.font .low button svg + svg { margin-left: 3px; }
.bar { width: 1px; height: 13px; background: #b3c9e4; }
.para .set button { padding: 0 2px; gap: 2px; }
.para .low { gap: 1px; }
.para .low .set + .set { margin-left: 3px; }
.para .set .gapb { gap: 3px; padding: 0 3px; }
.para .low > button { width: 15px; }
.hot { background: linear-gradient(#fcd68a, #ffb94d); border-radius: 2px; }

/* Style gallery */
.styles .body { padding: 1px 1px 1px 0; }
.gallery { display: flex; flex: 1; align-items: center; }
.st { flex: 1; min-width: 0; height: 39px; flex-direction: column; border: 2px solid transparent; border-width: 3px 2px; background: #fff padding-box; overflow: hidden; }
.st.sel { border: 2px solid #efb042; box-shadow: inset 0 0 0 1px #fbe2a8; border-radius: 2px; }
.pv { height: 20px; width: 40px; overflow: hidden; white-space: nowrap; font: 9px/20px Lato, sans-serif; color: #111; text-align: left; }
.nm { color: #1f2d66; white-space: nowrap; height: 11px; line-height: 11px; }
.h1, .h2 { font: 700 12px/20px "Liberation Serif", serif; }
.h1 { color: #365f91; }
.h2 { font-size: 11px; color: #4f81bd; }
.tt { font: 20px/18px "Liberation Serif", serif; color: #17365d; }
.subt { font-size: 11px; font-style: italic; color: #4f81bd; }
.it { font-style: italic; }
.gray { color: #808080; }
.blue { color: #4f81bd; }
.bold { font-weight: 700; }
.sc { font-variant: small-caps; }
.pink { color: #c0504d; }
.ul { text-decoration: underline; text-underline-offset: 2px; text-decoration-thickness: 1px; }
.gscroll { width: 10px; display: flex; flex-direction: column; gap: 1px; padding: 1px 0; }
.gscroll button { flex: 1; border: 1px solid #b3cae6; background: #dce9f8; }
.change { width: 36px; flex-direction: column; gap: 1px; line-height: 9px; }
.change span { white-space: nowrap; }
.change span svg { display: inline-block; }

/* Horizontal ruler */
.rulerrow { flex: none; height: 17px; display: flex; align-items: center; background: #9dbbe5; }
.corner { width: 16px; height: 16px; border: 1px solid #5a80cc; background: #b9d0f1; }
.hwrap { flex: 1; display: flex; justify-content: center; }
.hruler {
  position: relative;
  width: 652px;
  height: 8px;
  background: linear-gradient(90deg, #b9cfed 0 90px, #fff 90px 561px, #c4d6ef 561px);
}
.hticks { width: 663px; margin-left: -15px; display: flex; }
.hticks span {
  flex: 1;
  text-align: center;
  font-size: 7px;
  line-height: 8px;
  height: 8px;
  color: #4d5a6c;
  background:
    linear-gradient(#6c7889, #6c7889) no-repeat 0 2px / 1px 4px,
    linear-gradient(#8b96a6, #8b96a6) no-repeat 7px 3px / 1px 2px,
    linear-gradient(#8b96a6, #8b96a6) no-repeat 22px 3px / 1px 2px;
}
.hticks span:first-child { background: none; }
.mark { position: absolute; }
.first { left: 86px; top: -5px; }
.last { left: 557px; top: 2px; }
.rtoggle { width: 12px; }

/* Work area */
.work {
  flex: 1;
  min-height: 0;
  display: flex;
  background: linear-gradient(#9dbbe6, #7297c6 33%, #5079ae 74%, #648fce);
}
.vside { width: 16px; padding: 14px 4px 0 3px; background: #a3c0ea; overflow: hidden; border-right: 1px solid #8fafd9; }
.vruler { display: flex; flex-direction: column; height: 573px; background: linear-gradient(#b4cdee 0 76px, #fff 76px); border: solid #c5d8f3; border-width: 0 1px; }
.vruler span {
  flex: 1;
  display: flex;
  align-items: center;
  justify-content: center;
  writing-mode: vertical-rl;
  rotate: 180deg;
  font-size: 7px;
  line-height: 8px;
  color: #4d5a6c;
  background:
    linear-gradient(#6c7889, #6c7889) no-repeat 2px 0 / 4px 1px,
    linear-gradient(#8b96a6, #8b96a6) no-repeat 3px 7px / 2px 1px,
    linear-gradient(#8b96a6, #8b96a6) no-repeat 3px 22px / 2px 1px;
}
.canvas { position: relative; flex: 1; display: flex; justify-content: center; padding-top: 13px; overflow: hidden; }
.swoosh { position: absolute; left: 0; top: 0; }
.page {
  position: relative;
  width: 654px;
  background: #fefefe;
  border: 1px solid #4d648a;
  border-bottom: 0;
  box-shadow: 1px 1px 2px #2f486f;
  padding: 75px 90px;
}
.page p { margin: 0; display: flex; align-items: center; font: 11px/15px Lato, sans-serif; color: #111; }
.caret { width: 1px; height: 13px; background: #000; }
.vscroll { width: 12px; display: flex; flex-direction: column; background: #a8c3ea; padding: 0 1px 0 2px; }
.up { height: 11px; background: #7b9ccb; }
.track { flex: 1; background: #7a99c4; }
.thumb { height: 65%; display: flex; align-items: center; justify-content: center; border: 1px solid #8fa6c8; border-radius: 2px; background: linear-gradient(90deg, #e8eef6, #f3f6fa 40%, #bccbe0); }
.thumb i { width: 5px; height: 5px; border: solid #8492a8; border-width: 2px 0 1px; }
.down { height: 10px; background: #7a99c4; }
.nav { height: 11px; background: #b5cdf0; margin: 0 -1px; }

/* Status bar */
.status {
  flex: none;
  height: 16px;
  display: flex;
  align-items: center;
  background: linear-gradient(#dcebff, #c3dafa 50%, #a9c8f3 55%, #c5dcfa);
  border-top: 1px solid #b8d2f5;
  border-bottom: 1px solid #6d90ad;
  color: #1d3766;
}
.status > button { padding: 0 6px; height: 12px; border-right: 1px solid #a7c0e4; white-space: nowrap; }
.status > button:first-child { padding-left: 5px; }
.status > .spell { padding: 0 4px 0 5px; border: 0; }
.views { margin-left: auto; display: flex; align-self: stretch; border: 1px solid #8aa9d8; background: #c3d8f4; }
.views button { width: 12px; }
.status > .pct { padding: 0 5px 0 6px; border: 0; }
.zoom { display: flex; align-items: center; gap: 1px; padding-right: 3px; }
.zoom input { width: 66px; height: 12px; margin: 0; appearance: none; background: linear-gradient(#6b89b8, #6b89b8) no-repeat center / 100% 1px; }
.zoom input::-webkit-slider-thumb { appearance: none; width: 6px; height: 9px; border: 1px solid #58729a; border-radius: 1px 1px 3px 3px; background: #edf3fb; }

/* Taskbar */
.taskbar {
  flex: none;
  height: 26px;
  display: flex;
  align-items: center;
  background: linear-gradient(110deg, #4b4c49 0 30%, #565754 32% 39%, #484946 41% 54%, #535451 56% 65%, #4a4b48 68% 80%, #3c3d3a);
  border-top: 1px solid #2d2f2d;
  padding-left: 3px;
}
.pin { width: 30px; margin-right: 11px; }
.pin:nth-child(4) { margin-right: 7px; }
.app { width: 39px; height: 25px; margin-right: 2px; border: 1px solid #969794; border-radius: 2px; background: linear-gradient(135deg, #8b8c89, #5b5c59 60%, #6b6c69); }
.app.lit { background: linear-gradient(135deg, #d3d5d4, #969896 60%, #b3b5b3); border-color: #c8cac8; }
.tray { margin-left: auto; display: flex; align-items: center; gap: 6px; height: 100%; color: #fff; }
.lbl { font-size: 9px; }
.chev { align-self: flex-start; line-height: 8px; font-size: 10px; margin: 0 4px 0 -2px; }
.clock { margin-left: 6px; text-align: center; line-height: 11px; }
.desk { width: 10px; height: 100%; border: 1px solid #777; border-width: 0 1px; background: linear-gradient(90deg, #555, #30312f); }

.pointer { position: absolute; left: 46px; top: 80px; z-index: 5; }
```
